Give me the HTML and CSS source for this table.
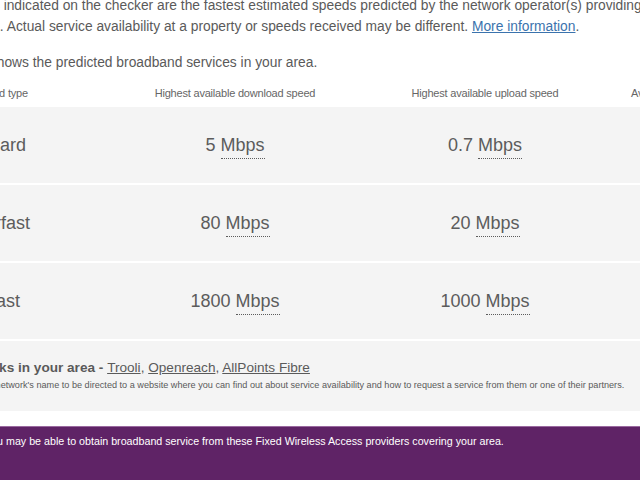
FILE: index.html
```html
<!DOCTYPE html>
<html lang="en">
<head>
<meta charset="utf-8">
<title>Broadband checker results</title>
<link rel="stylesheet" href="styles.css">
</head>
<body>
<div class="page">
  <p class="intro">Speeds indicated on the checker are the fastest estimated speeds predicted by the network operator(s) providing service to<br>an area. Actual service availability at a property or speeds received may be different. <a href="#" class="info-link">More information</a>.</p>
  <p class="intro intro-second">Table shows the predicted broadband services in your area.</p>

  <div class="speed-table">
    <div class="row head">
      <div class="cell type">Broadband type</div>
      <div class="cell num">Highest available download speed</div>
      <div class="cell num">Highest available upload speed</div>
      <div class="cell avail">Availability</div>
    </div>
    <div class="row body">
      <div class="cell type">Standard</div>
      <div class="cell num">5 <abbr title="Megabits per second">Mbps</abbr></div>
      <div class="cell num">0.7 <abbr title="Megabits per second">Mbps</abbr></div>
      <div class="cell avail"></div>
    </div>
    <div class="row body">
      <div class="cell type">Superfast</div>
      <div class="cell num">80 <abbr title="Megabits per second">Mbps</abbr></div>
      <div class="cell num">20 <abbr title="Megabits per second">Mbps</abbr></div>
      <div class="cell avail"></div>
    </div>
    <div class="row body">
      <div class="cell type">Ultrafast</div>
      <div class="cell num">1800 <abbr title="Megabits per second">Mbps</abbr></div>
      <div class="cell num">1000 <abbr title="Megabits per second">Mbps</abbr></div>
      <div class="cell avail"></div>
    </div>
  </div>

  <div class="networks">
    <p class="networks-title"><strong>Networks in your area - </strong><a href="#">Trooli</a>, <a href="#">Openreach</a>, <a href="#">AllPoints Fibre</a></p>
    <p class="networks-note">Click on a network's name to be directed to a website where you can find out about service availability and how to request a service from them or one of their partners.</p>
  </div>

  <div class="fwa">
    <p>You may be able to obtain broadband service from these Fixed Wireless Access providers covering your area.</p>
  </div>
</div>
</body>
</html>
```

FILE: styles.css
```css
html, body {
  margin: 0;
  padding: 0;
  overflow: hidden;
  background: #ffffff;
}

body {
  font-family: "Liberation Sans", Arial, sans-serif;
  color: #5a5a5a;
}

.page {
  width: 1000px;
  margin-left: -47px;
  margin-top: -5px;
}

.intro {
  margin: 0;
  font-size: 13.8px;
  line-height: 21px;
  white-space: nowrap;
}

.intro-second {
  margin-top: 15px;
}

.info-link {
  color: #3b73ad;
  text-decoration: underline;
}

.speed-table {
  display: flex;
  flex-direction: column;
  gap: 2px;
  margin-top: 12px;
}

.row {
  display: grid;
  grid-template-columns: 157px 250px 250px 1fr;
  align-items: center;
}

.row.head {
  font-size: 11px;
  letter-spacing: -0.2px;
  line-height: 16px;
  color: #666666;
  padding-bottom: 4px;
}

.row.body {
  background: #f4f4f4;
  height: 76px;
  font-size: 18px;
  line-height: 22px;
  color: #5c5c5c;
}

.cell.num {
  text-align: center;
}

.row.head .cell.avail {
  padding-left: 21px;
}

abbr {
  text-decoration: none;
  border-bottom: 1px dotted #5c5c5c;
  padding-bottom: 3px;
}

.networks {
  background: #f4f4f4;
  margin-top: 2px;
  padding: 18px 0 19px;
}

.networks-title {
  margin: 0;
  font-size: 13.6px;
  line-height: 18px;
  white-space: nowrap;
}

.networks-title strong {
  font-weight: bold;
}

.networks-title a {
  color: #5a5a5a;
  text-decoration: underline;
}

.networks-note {
  margin: 1px 0 0;
  font-size: 9.15px;
  line-height: 14px;
  white-space: nowrap;
}

.fwa {
  margin-top: 15px;
  background: #5f2366;
  border-top: 1px solid #9a6aa0;
  padding: 6px 0 40px 32px;
}

.fwa p {
  margin: 0;
  color: #ffffff;
  font-size: 10.7px;
  line-height: 16px;
  white-space: nowrap;
}
```
